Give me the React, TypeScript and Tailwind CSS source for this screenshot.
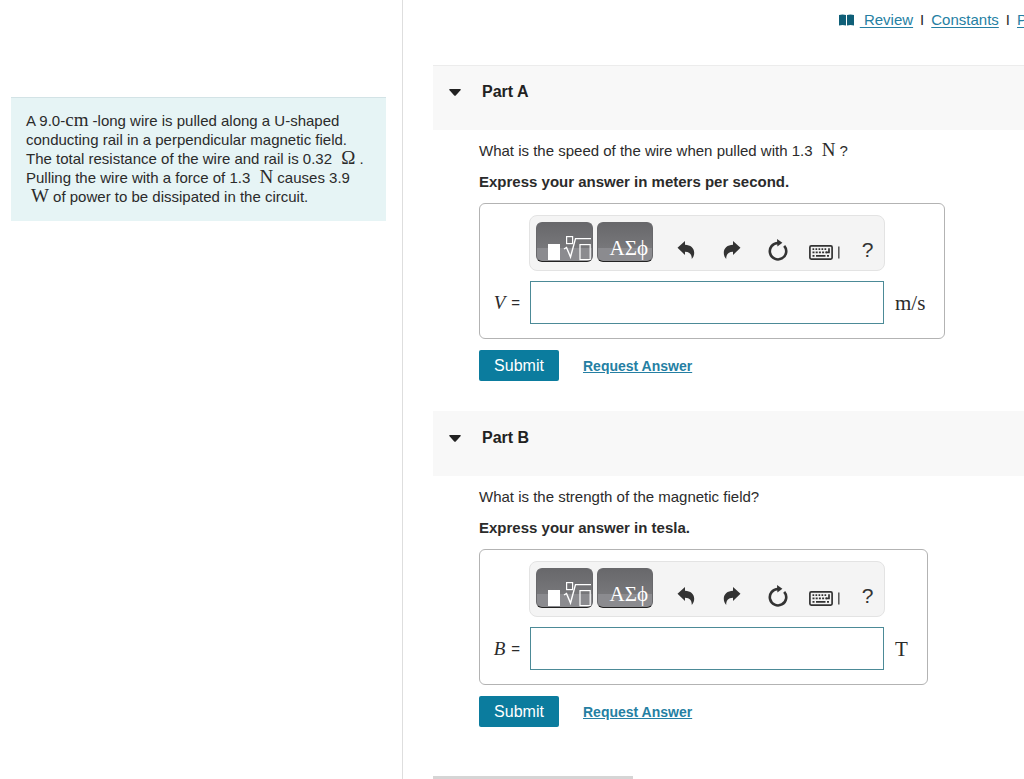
import type { ReactNode } from "react";

const parts = [
  {
    id: "a",
    title: "Part A",
    question: (
      <>
        What is the speed of the wire when pulled with 1.3 <Unit>N</Unit> ?
      </>
    ),
    instruction: "Express your answer in meters per second.",
    variable: "V",
    unit: "m/s",
    headerBorder: "border-[#ececec]",
  },
  {
    id: "b",
    title: "Part B",
    question: <>What is the strength of the magnetic field?</>,
    instruction: "Express your answer in tesla.",
    variable: "B",
    unit: "T",
    headerBorder: "border-[#f8f8f8]",
  },
];

function Unit({ children }: { children: ReactNode }) {
  return <span className="ml-[5px] font-['Liberation_Serif',serif] text-[19px] leading-0">{children}</span>;
}

function BookIcon() {
  return (
    <svg width="15" height="12" viewBox="0 0 15 12" fill="#0f5f78" aria-hidden="true">
      <path d="M0 1 Q3.5 0 7 1 V11.5 Q3.5 10.5 0 11.5 Z" />
      <path d="M8 1 Q11.5 0 15 1 V11.5 Q11.5 10.5 8 11.5 Z" />
    </svg>
  );
}

function UndoIcon({ flip = false }: { flip?: boolean }) {
  return (
    <svg width="18" height="18" viewBox="0 0 18 18" fill="#333" aria-hidden="true" className={flip ? "-scale-x-100" : ""}>
      <path d="M0.5 6.8 L8 0 V3.8 C13.5 4 17.2 7 17.2 11.8 C17.2 14.2 16.4 16.2 14.8 18 C14.8 13.6 13 11 8 10.8 V14 Z" />
    </svg>
  );
}

function ResetIcon() {
  return (
    <svg width="20" height="22" viewBox="0 0 20 22" aria-hidden="true">
      <path d="M11 4 H10 A8.2 8.2 0 1 0 16.2 6.8" fill="none" stroke="#333" strokeWidth="2.6" />
      <path d="M9 0 L14.4 3.8 L9.4 7.6 Z" fill="#333" />
    </svg>
  );
}

function KeyboardIcon() {
  return (
    <svg width="31" height="15" viewBox="0 0 31 15" aria-hidden="true" className="mt-1">
      <rect x="0.9" y="0.9" width="22.2" height="13.2" rx="1.3" fill="none" stroke="#333" strokeWidth="1.7" />
      <path d="M3.5 4.2 H18.5" stroke="#333" strokeWidth="1.7" strokeDasharray="1.7 1.3" />
      <path d="M3.5 7.4 H18" stroke="#333" strokeWidth="1.7" strokeDasharray="2 1.2" />
      <path d="M3.5 10.9 H5.5 M7 10.9 H16.5 M18 10.9 H20" stroke="#333" strokeWidth="1.7" />
      <path d="M17 7.4 H20 V3.3" fill="none" stroke="#333" strokeWidth="1.7" />
      <path d="M29.8 1.5 V13.5" stroke="#555" strokeWidth="1.5" />
    </svg>
  );
}

function TemplateIcon() {
  return (
    <svg width="44" height="26" viewBox="0 0 44 26" aria-hidden="true">
      <rect x="0" y="9" width="12" height="16" fill="#fff" />
      <rect x="18.6" y="1.6" width="6" height="7" fill="none" stroke="#fff" strokeWidth="1.2" />
      <path d="M16 14 L18.5 12.5 L22.5 22 L27.5 3.6 H43" fill="none" stroke="#fff" strokeWidth="1.4" />
      <rect x="32" y="9.6" width="10.2" height="15" fill="none" stroke="#fff" strokeWidth="1.2" />
    </svg>
  );
}

const paletteButton =
  "flex h-10 items-end justify-end rounded-md border border-[#68686b] border-b-[#222] bg-linear-to-b from-[#68686b] from-0% via-[#77777a] via-65% to-[#8b8b8f] to-65%";
const toolButton = "flex h-10 w-[46px] items-center justify-center";

function Toolbar() {
  return (
    <div className="flex h-14 items-end rounded-lg border border-[#e3e3e3] bg-[#f4f4f4] pl-1.5">
      <div className="mb-2 flex gap-1">
        <button type="button" aria-label="Templates" className={`${paletteButton} w-[57px]`}>
          <TemplateIcon />
        </button>
        <button
          type="button"
          className={`${paletteButton} w-14 pr-1 pb-px font-['Liberation_Serif',serif] text-[21px] leading-6 text-white`}
        >
          ΑΣϕ
        </button>
      </div>
      <div className="ml-2.5 flex flex-1">
        <button type="button" aria-label="Undo" className={toolButton}>
          <UndoIcon />
        </button>
        <button type="button" aria-label="Redo" className={toolButton}>
          <UndoIcon flip />
        </button>
        <button type="button" aria-label="Reset" className={toolButton}>
          <ResetIcon />
        </button>
        <button type="button" aria-label="Keyboard shortcuts" className={toolButton}>
          <KeyboardIcon />
        </button>
        <button type="button" className="flex h-10 flex-1 items-center justify-center pl-1 text-[21px] text-[#333]">
          ?
        </button>
      </div>
    </div>
  );
}

function Part({ part }: { part: (typeof parts)[number] }) {
  const inputId = `answer-${part.id}`;

  return (
    <section className="pb-[30px]">
      <div className={`flex items-center border-t bg-[#f8f8f8] pt-3.5 pb-[26px] pl-4 ${part.headerBorder}`}>
        <svg width="12" height="7" viewBox="0 0 12 7" fill="#222" aria-hidden="true">
          <path d="M0.8 0 H11.2 Q12.4 0 11.4 1.2 L7 6.2 Q6 7.2 5 6.2 L0.6 1.2 Q-0.4 0 0.8 0 Z" />
        </svg>
        <h2 className="ml-[21px] text-base font-bold text-[#222]">{part.title}</h2>
      </div>

      <div className="flex flex-col items-start gap-[11px] pt-[11px] pl-[46px] text-[15px] leading-5">
        <p>{part.question}</p>
        <p className="font-bold">{part.instruction}</p>

        <div className="grid grid-cols-[49px_356px_auto] gap-y-2.5 rounded-md border border-[#b3b3b3] pt-[11px] pr-[19px] pb-3.5">
          <div className="col-start-2">
            <Toolbar />
          </div>
          <label htmlFor={inputId} className="col-start-1 flex items-center justify-end gap-1.5 pr-[9px]">
            <i className="font-['Liberation_Serif',serif] text-[19px]">{part.variable}</i>
            <span>=</span>
          </label>
          <input id={inputId} type="text" className="mx-px h-[43px] border border-[#4c8a97] bg-white px-2 outline-none" />
          <span className="flex items-center pl-2.5 font-['Liberation_Serif',serif] text-[21px]">{part.unit}</span>
        </div>

        <div className="flex items-center gap-6">
          <button type="submit" className="h-[31px] w-20 rounded-xs bg-[#0b7c9e] text-base text-white">
            Submit
          </button>
          <a href="#" className="text-sm font-bold text-[#257fa3] underline">
            Request Answer
          </a>
        </div>
      </div>
    </section>
  );
}

export default function App() {
  return (
    <div className="flex min-h-screen bg-white font-['Liberation_Sans',Arial,sans-serif] text-[#2b2b2b]">
      <aside className="w-[403px] shrink-0 border-r border-[#dedede] pt-[97px] pr-4 pl-[11px]">
        <p className="border-t border-[#d3e3e6] bg-[#e6f4f5] px-[15px] pt-[13px] pb-[15px] text-[15px] leading-[19px]">
          A 9.0-<span className="font-['Liberation_Serif',serif] text-[19px] leading-0">cm</span> -long wire is
          pulled along a U-shaped conducting rail in a perpendicular magnetic field. The total resistance of the wire
          and rail is 0.32 <Unit>Ω</Unit> . Pulling the wire with a force of 1.3 <Unit>N</Unit> causes 3.9{" "}
          <Unit>W</Unit> of power to be dissipated in the circuit.
        </p>
      </aside>

      <main className="min-w-0 flex-1 overflow-hidden pl-[30px]">
        <nav className="-mr-[3px] flex h-[65px] items-start justify-end gap-[7px] pt-2.5 text-[15px] leading-5 whitespace-nowrap">
          <span className="flex items-center gap-1.5">
            <BookIcon />
            <a href="#" className="whitespace-pre text-[#257fa3] underline underline-offset-2">
              {" Review"}
            </a>
          </span>
          <span>I</span>
          <a href="#" className="text-[#257fa3] underline underline-offset-2">
            Constants
          </a>
          <span>I</span>
          <a href="#" className="text-[#257fa3] underline underline-offset-2">
            P
          </a>
        </nav>

        {parts.map((part) => (
          <Part key={part.id} part={part} />
        ))}

        <div className="mt-[19px] h-[3px] w-[200px] bg-[#d5d5d5]" />
      </main>
    </div>
  );
}
